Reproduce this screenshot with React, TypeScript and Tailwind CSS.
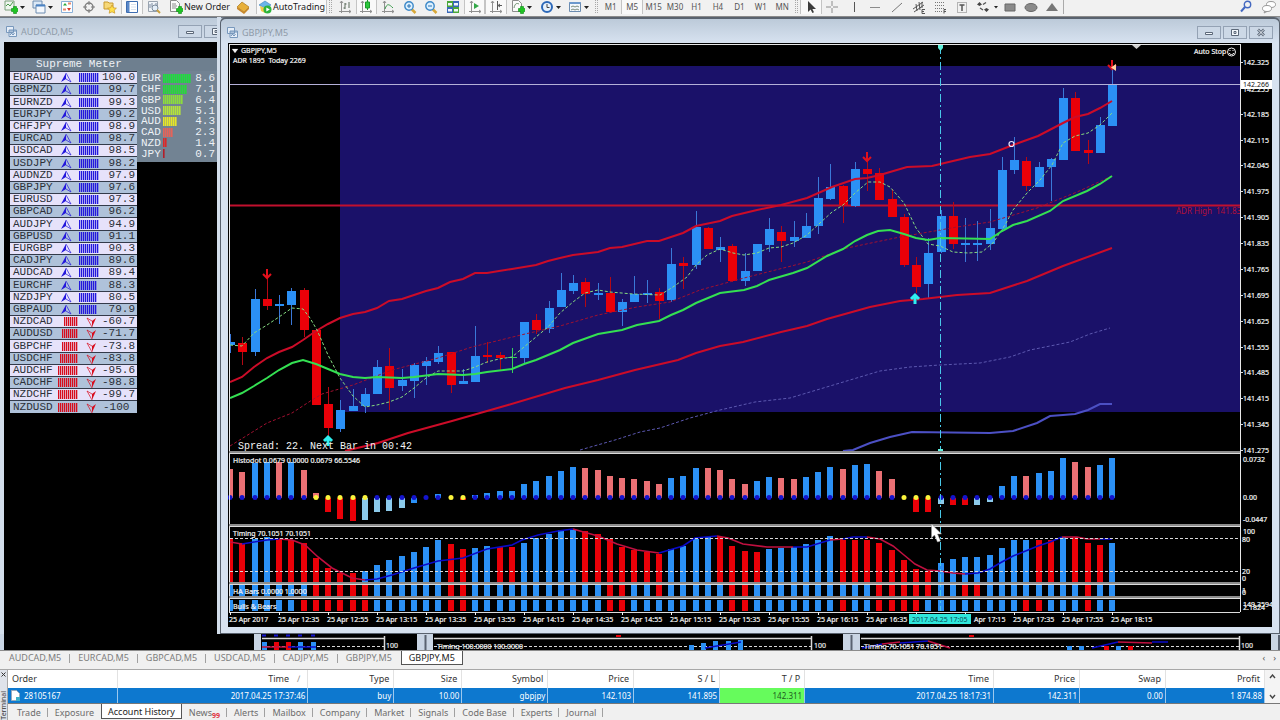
import { ReactNode } from "react";

const UI = "font-['Noto_Sans','Open_Sans',sans-serif]";
const MONO = "font-['Liberation_Mono',monospace]";

const BLUE = "#2b90f5";
const RED = "#ea0008";
const PINK = "#ea7074";
const PALE = "#8ccaea";

/* ---------- chart data ---------- */

type TCandle = [number, number, number, number, "b" | "r" | "g"];

// wick top, body top, body bottom, wick bottom, colour
const candles: TCandle[] = [
  [334, 342, 345, 353, "b"], [337, 343, 352, 365, "r"], [289, 299, 352, 356, "b"], [277, 299, 306, 310, "r"],
  [295, 304, 306, 324, "b"], [288, 291, 305, 325, "b"], [288, 290, 330, 337, "r"], [330, 330, 405, 405, "r"],
  [387, 404, 428, 437, "r"], [400, 410, 429, 432, "b"], [389, 406, 411, 411, "b"], [388, 394, 406, 413, "b"],
  [360, 367, 394, 394, "b"], [348, 366, 388, 410, "r"], [369, 380, 386, 391, "b"], [363, 365, 381, 398, "b"],
  [357, 361, 366, 385, "b"], [346, 353, 362, 364, "b"], [352, 352, 385, 393, "r"], [369, 381, 384, 384, "b"],
  [326, 356, 382, 382, "b"], [342, 355, 357, 363, "r"], [352, 355, 358, 370, "r"], [348, 357, 358, 373, "g"],
  [322, 322, 358, 364, "b"], [314, 320, 330, 334, "r"], [301, 308, 329, 333, "b"], [273, 290, 307, 307, "b"],
  [275, 283, 291, 294, "b"], [278, 282, 294, 307, "r"], [283, 293, 295, 300, "b"], [277, 293, 312, 313, "r"],
  [299, 302, 312, 326, "b"], [276, 294, 302, 302, "b"], [280, 293, 295, 303, "b"], [288, 292, 301, 319, "r"],
  [248, 264, 300, 302, "b"], [257, 263, 266, 289, "r"], [211, 227, 265, 269, "b"], [227, 228, 249, 249, "r"],
  [237, 247, 250, 262, "b"], [244, 246, 281, 282, "r"], [253, 271, 281, 286, "b"], [244, 244, 271, 271, "b"],
  [218, 229, 245, 252, "b"], [226, 232, 241, 262, "r"], [221, 237, 241, 247, "b"], [213, 226, 238, 238, "b"],
  [177, 198, 226, 234, "b"], [164, 187, 199, 200, "b"], [185, 186, 205, 223, "r"], [162, 169, 206, 207, "b"],
  [160, 169, 174, 191, "r"], [168, 173, 200, 200, "r"], [189, 199, 217, 217, "r"], [214, 217, 265, 267, "r"],
  [257, 265, 287, 293, "r"], [238, 253, 284, 298, "b"], [210, 216, 252, 253, "b"], [202, 216, 244, 249, "r"],
  [218, 243, 245, 262, "b"], [221, 243, 245, 261, "b"], [209, 228, 244, 250, "b"], [157, 170, 229, 230, "b"],
  [137, 160, 170, 174, "b"], [157, 161, 186, 191, "r"], [162, 167, 187, 187, "b"], [158, 159, 167, 201, "b"],
  [88, 98, 160, 160, "b"], [92, 98, 151, 151, "r"], [140, 150, 153, 164, "r"], [117, 125, 153, 153, "b"],
  [68, 84, 126, 126, "b"],
];

const candleFill = { b: BLUE, r: RED, g: "#35d05a" };

// outer end of every histogram bar, the zero line is at 498
const histo = [
  469, 472, 463, 462, 462, 462, 470, 493, 512, 519, 521, 520, 512, 511, 508, 503, 498, 494, 498, 500, 495, 493, 491,
  491, 484, 481, 476, 471, 467, 468, 470, 476, 478, 479, 481, 484, 478, 476, 468, 468, 470, 479, 484, 481, 477, 478,
  479, 477, 472, 467, 469, 465, 464, 471, 479, 498, 512, 512, 504, 505, 505, 505, 502, 486, 476, 476, 473, 471, 458,
  462, 467, 465, 458,
];
const histoColor = "ppbbpbpprrrllllbbbrrbbbbbbbbbpppppppbbbppppbbppbbbpbbpprrrlrrllbbpbbbppbb";
const yellowDots = [7, 8, 9, 10, 11, 18, 19, 55, 56, 57];
const histoFill: Record<string, string> = { p: PINK, b: BLUE, r: RED, l: PALE };

const timing = [
  539, 543, 539, 537, 539, 540, 543, 558, 568, 573, 573, 571, 565, 560, 556, 552, 547, 540, 544, 549, 548, 546, 547,
  547, 543, 538, 534, 530, 530, 531, 534, 539, 547, 550, 552, 554, 549, 546, 539, 537, 537, 546, 551, 552, 549, 548,
  547, 544, 540, 536, 540, 540, 540, 543, 550, 560, 569, 571, 563, 559, 557, 557, 555, 548, 540, 540, 540, 540, 537,
  537, 543, 545, 543,
];
const timingColor = "rrbbrrrrrrrbbbbbbbrrbbrrbbbbbrrrrrrrbbbbrrrrbbbbbbrrrrrrrrbbbbbbbbrrbrrrb";
const haColor = "bbbbbbbrrrrrbbbbbbrrbbbbbbbbbbbrrbbrbbbbbrrbbbbbbbbbbrrrrrbbrrbbbbbbbbrbb";
const bullsColor = "bbbbbbrrrrrrbbbbbbrrbbbbbbbbbbbrrbbbbbbbbrrbbbbbbbrbbrrrrbbbbbbbbrrbbbrbb";

const upperBand =
  "230,382 242,377 254,367 267,358 279,352 292,347 303,340 316,331 328,324 340,318 353,314 365,312 377,308 389,301 402,299 414,295 426,291 438,288 450,282 463,279 475,273 487,273 499,271 512,269 524,267 536,265 548,261 560,258 573,255 598,252 610,248 622,247 647,241 659,241 683,233 696,226 720,221 732,216 757,210 781,205 807,198 832,187 855,179 867,178 880,175 890,172 907,167 932,166 953,161 970,157 990,154 1013,145 1038,136 1063,123 1075,117 1088,114 1100,108 1112,101";
const greenLine =
  "230,398 242,393 254,386 267,378 279,370 292,363 303,360 316,364 328,369 340,374 353,377 365,378 377,377 402,378 414,377 438,374 463,375 475,374 487,372 512,369 524,364 536,360 548,355 560,350 573,343 598,334 610,332 622,330 637,325 659,321 671,315 683,310 696,303 720,293 744,290 757,286 769,280 793,273 807,268 827,256 843,249 855,241 867,235 878,231 890,230 904,234 916,238 928,240 940,238 990,239 1002,231 1013,225 1027,221 1050,211 1063,201 1087,191 1100,184 1112,176";
const lowerBand =
  "345,451 378,443 408,433 452,421 508,405 565,388 598,380 635,370 678,360 696,353 720,346 743,342 781,332 807,326 827,319 870,307 900,301 923,299 957,295 990,293 1027,281 1063,266 1112,248";
const midBand =
  "230,446 267,423 292,413 312,400 322,394 353,385 392,370 438,358 472,347 525,334 560,326 598,315 637,307 670,302 700,290 744,278 807,262 847,248 900,237 923,233 957,227 990,222 1037,208 1077,192 1112,176";
const fastMa =
  "230,345 242,346 254,333 267,325 279,317 292,308 303,309 310,318 317,330 328,355 340,378 353,396 365,407 377,405 389,402 402,397 414,388 426,378 438,371 463,371 475,367 487,362 499,359 512,357 524,347 536,337 548,327 560,313 573,302 585,293 598,290 610,292 633,294 660,295 673,287 687,277 696,265 707,255 720,249 733,253 744,255 757,253 769,248 781,247 793,243 807,235 820,223 832,212 843,205 855,193 868,182 880,182 890,187 904,203 916,228 928,244 940,246 953,252 968,253 982,252 993,243 1005,225 1013,210 1027,193 1040,180 1052,165 1063,143 1075,136 1088,133 1100,125 1112,113";
const slowDash =
  "580,450 615,440 640,432 660,428 690,418 720,410 755,402 790,398 830,386 860,377 880,371 910,367 940,365 980,363 1010,357 1030,350 1070,342 1090,334 1110,328";
const slowLine =
  "843,451 853,450 870,443 890,437 912,432 990,433 1013,431 1037,423 1050,416 1063,415 1075,414 1088,410 1100,404 1112,404";

const timingLine: [string, string][] = [
  ["c", "230,542 242,544"],
  ["b", "242,544 254,542 267,540 279,539"],
  ["c", "279,539 292,540 305,545 318,557 332,568 352,578 365,580"],
  ["b", "365,580 377,579 392,575 414,568 438,561 463,558 487,549 512,545 522,540 538,535 558,531 573,529"],
  ["c", "573,529 580,531 598,536 617,544 637,550 659,553"],
  ["b", "659,553 683,546 695,538 717,536"],
  ["c", "717,536 728,538 743,544 767,547 793,547"],
  ["b", "793,547 807,547 830,540"],
  ["c", "830,540 843,539"],
  ["b", "843,539 853,537 867,537"],
  ["c", "867,537 880,539 893,546 904,555 915,564 927,570 940,571 953,573 965,574"],
  ["b", "965,574 978,573 990,569 1000,563 1013,556 1038,546 1050,542 1062,537"],
  ["c", "1062,537 1077,537 1087,539 1100,539"],
  ["b", "1100,539 1112,539"],
];

const prices = [
  "142.325", "142.255", "142.185", "142.115", "142.045", "141.975", "141.905", "141.835", "141.765", "141.695",
  "141.625", "141.555", "141.485", "141.415", "141.345", "141.275",
];

const times = [
  "2017", "12:35", "12:55", "13:15", "13:35", "13:55", "14:15", "14:35", "14:55", "15:15", "15:35", "15:55", "16:15",
  "16:35", "", "", "17:35", "17:55", "18:15",
];

const barX = (i: number) => Math.round(230 + i * 12.25);

/* ---------- chart ---------- */

function Strip({ colors, y, height }: { colors: string; y: number; height: number }) {
  return (
    <>
      {colors.split("").map((c, i) => (
        <rect key={i} x={barX(i) - 3} y={y} width={6} height={height} fill={c === "b" ? BLUE : RED} />
      ))}
    </>
  );
}

function DownArrow({ x, y }: { x: number; y: number }) {
  return <path d={`M${x} ${y - 5}v9M${x - 4} ${y}l4 4l4-4`} fill="none" stroke="#e3101c" strokeWidth={2} />;
}

function UpArrow({ x, y }: { x: number; y: number }) {
  return <path d={`M${x} ${y + 5}v-9M${x - 4} ${y}l4-4l4 4`} fill="none" stroke="#2ff0f0" strokeWidth={3} />;
}

function PriceChart() {
  return (
    <svg
      viewBox="228 43 1044 584"
      className={`block w-full bg-black text-[7px] ${UI}`}
      role="img"
      aria-label="GBPJPY M5 chart"
    >
      <defs>
        <clipPath id="plot">
          <rect x="230" y="45" width="1010" height="567" />
        </clipPath>
      </defs>
      <rect x="340" y="66" width="900" height="346" fill="#1a1169" />

      <g clipPath="url(#plot)" fill="none">
        <path d="M229 205.5H1240" stroke="#c2102e" strokeWidth="2" />
        {candles.map(([hi, top, bottom, lo, c], i) => (
          <g key={i}>
            <rect x={barX(i)} y={hi} width="1" height={lo - hi} fill={c === "b" ? "#3a78d8" : c === "r" ? "#b40814" : "#35d05a"} />
            <rect x={barX(i) - 4} y={top} width="9" height={Math.max(bottom - top, 1)} fill={candleFill[c]} />
          </g>
        ))}
        <polyline points={midBand} stroke="#a01030" strokeDasharray="3 2" />
        <polyline points={slowDash} stroke="#5c58b0" strokeDasharray="3 2" />
        <polyline points={slowLine} stroke="#4c50c4" strokeWidth="2" />
        <polyline points={upperBand} stroke="#cc0c28" strokeWidth="2" />
        <polyline points={lowerBand} stroke="#cc0c28" strokeWidth="2" />
        <polyline points={fastMa} stroke="#86dc80" strokeDasharray="3 2" />
        <polyline points={greenLine} stroke="#34e052" strokeWidth="2" />
      </g>

      <path d="M229 84.5H1240" stroke="#b4b0d8" />
      <DownArrow x={267} y={274} />
      <DownArrow x={867} y={157} />
      <DownArrow x={1112} y={65} />
      <path d="M1116 64v7l-5-3.500z" fill="#ffd0a0" />
      <UpArrow x={328} y={441} />
      <UpArrow x={915} y={299} />
      <circle cx="1011.500" cy="144" r="2.500" fill="none" stroke="#e8e8ff" strokeWidth="1.200" />
      <text x="1176" y="214" fill="#b41038" className="text-[8px] whitespace-pre">
        {"ADR High  141.83"}
      </text>

      {/* price axis */}
      <rect x="1240" y="45" width="32" height="582" fill="#000" />
      {prices.map((p, i) => {
        const y = 62 + Math.round(i * 25.87);
        return (
          <g key={p}>
            <path d={`M1240 ${y}.5h3`} stroke="#ddd" />
            <text x="1243" y={i === 1 ? y + 4 : y + 3} fill="#f2f2f2" stroke="#f2f2f2" strokeWidth="0.200">
              {p}
            </text>
          </g>
        );
      })}
      <rect x="1241" y="80" width="31" height="9" fill="#fff" />
      <text x="1243" y="87" fill="#111">
        142.266
      </text>

      {/* captions */}
      <g fill="#f4f4f4" stroke="#f4f4f4" strokeWidth="0.200">
        <path d="M232 49h6l-3 4z" />
        <text x="241" y="53">GBPJPY,M5</text>
        <text x="233" y="63" className="whitespace-pre">
          {"ADR 1895  Today 2269"}
        </text>
        <text x="1194" y="54">Auto Stop</text>
        <text x="238" y="449" strokeWidth="0" className={`text-[10px] ${MONO}`}>
          Spread: 22. Next Bar in 00:42
        </text>
      </g>
      <g stroke="#f0f0f0" fill="none">
        <circle cx="1231.500" cy="52" r="4" />
        <path d="M1229 53c1 2 4 2 5 0M1230 50v1M1233 50v1" />
      </g>
      <path d="M1132 45h9l-4.500 4z" fill="#d0d0d0" />

      {/* sub windows */}
      <rect x="230" y="451" width="1010" height="3" fill="#000" />
      {histo.map((y, i) => (
        <rect
          key={i}
          x={barX(i) - 3}
          y={Math.min(y, 498)}
          width={6}
          height={Math.abs(y - 498)}
          fill={histoFill[histoColor[i]]}
          clipPath="url(#plot)"
        />
      ))}
      {histo.map((_, i) => (
        <circle key={i} cx={barX(i)} cy={497.5} r={2.5} fill={yellowDots.includes(i) ? "#fbf43c" : "#1414cc"} />
      ))}
      <g clipPath="url(#plot)">
        {timing.map((y, i) => (
          <rect key={i} x={barX(i) - 3} y={y} width={6} height={582 - y} fill={timingColor[i] === "b" ? BLUE : RED} />
        ))}
        <Strip colors={haColor} y={585} height={11} />
        <Strip colors={bullsColor} y={600} height={11} />
        {timingLine.map(([c, points], i) => (
          <polyline key={i} points={points} fill="none" stroke={c === "b" ? "#0a0ac8" : "#c01040"} strokeWidth="1.600" />
        ))}
      </g>
      <path d="M230 538.500H1240M230 571.500H1240" stroke="#d8d8d8" strokeDasharray="3 2" />
      <path d="M940.500 46V611" stroke="#48c8e8" strokeDasharray="8 3 2 3" />
      <path d="M938 45h5v3l-2.500 3l-2.500-3zM938 449h5v4h-5z" fill="#60f0dc" />
      <path d="M229 44.500H1240M229.500 44V612M1240.500 44V612" stroke="#e8e8e8" />
      <g stroke="#dcdcdc">
        <path d="M229 453.500H1240M229 526.500H1240M229 584.500H1240M229 598.500H1240M229 612.500H1240" />
        <path d="M229 452H1240M229 525H1240M229 583H1240M229 597H1240" stroke="#8c8c8c" strokeWidth="2" />
      </g>
      <g fill="#f4f4f4" stroke="#f4f4f4" strokeWidth="0.200">
        <text x="233" y="463">Histodot 0.0679 0.0000 0.0679 66.5546</text>
        <text x="233" y="536">Timing 70.1051 70.1051</text>
        <text x="233" y="594">HA Bars 0.0000 1.0000</text>
        <text x="233" y="609">Bulls &amp; Bears</text>
        <text x="1243" y="462">0.0732</text>
        <text x="1243" y="500">0.00</text>
        <text x="1243" y="522">-0.0447</text>
        <text x="1243" y="534">100</text>
        <text x="1242" y="542">80</text>
        <text x="1242" y="574">20</text>
        <text x="1242" y="581">0</text>
        <text x="1242" y="593">1</text>
        <text x="1242" y="595">0</text>
        <text x="1243" y="607">149.3594</text>
        <text x="1243" y="610">2.1824</text>
        {times.map((t, i) => (
          <g key={i}>
            <path d={`M${barX(i * 4)}.500 612v3`} strokeWidth="1" />
            {t && (
              <text x={barX(i * 4) - 1} y="622">
                25 Apr {t}
              </text>
            )}
          </g>
        ))}
        <text x="974" y="622">Apr 17:15</text>
      </g>
      <rect x="909" y="614" width="62" height="10" fill="#2fe8dc" />
      <text x="912" y="622" fill="#0c4a58">
        2017.04.25 17:05
      </text>
      <path d="M931.500 524v14l3-3l3 7l3-1l-3-7h4z" fill="#fff" stroke="#999" strokeWidth="0.500" />
    </svg>
  );
}

/* ---------- supreme meter ---------- */

const pairs: [string, string, number][] = [
  ["EURAUD", "100.0", 10], ["GBPNZD", "99.7", 10], ["EURNZD", "99.3", 10], ["EURJPY", "99.2", 10],
  ["CHFJPY", "98.9", 10], ["EURCAD", "98.7", 10], ["USDCAD", "98.5", 10], ["USDJPY", "98.2", 10],
  ["AUDNZD", "97.9", 10], ["GBPJPY", "97.6", 10], ["EURUSD", "97.3", 10], ["GBPCAD", "96.2", 10],
  ["AUDJPY", "94.9", 10], ["GBPUSD", "91.1", 10], ["EURGBP", "90.3", 10], ["CADJPY", "89.6", 10],
  ["AUDCAD", "89.4", 10], ["EURCHF", "88.3", 9], ["NZDJPY", "80.5", 9], ["GBPAUD", "79.9", 9],
  ["NZDCAD", "-60.7", -7], ["AUDUSD", "-71.7", -8], ["GBPCHF", "-73.8", -8], ["USDCHF", "-83.8", -9],
  ["AUDCHF", "-95.6", -10], ["CADCHF", "-98.8", -10], ["NZDCHF", "-99.7", -10], ["NZDUSD", "-100", -10],
];

const currencies: [string, string, number, string][] = [
  ["EUR", "8.6", 14, "#1edc3c"], ["CHF", "7.1", 12, "#28d83a"], ["GBP", "6.4", 10, "#8cdc3c"],
  ["USD", "5.1", 9, "#b4e23c"], ["AUD", "4.3", 7, "#e6e628"], ["CAD", "2.3", 5, "#e4645a"],
  ["NZD", "1.4", 2, "#dc2828"], ["JPY", "0.7", 1, "#b41e28"],
];

function Gauge({ bars }: { bars: number }) {
  const up = bars > 0;
  const count = Math.abs(bars);
  return (
    <svg width="42" height="11" viewBox="0 0 42 11" className="block" fill={up ? "#2418dc" : "#d80c1c"}>
      {Array.from({ length: count }, (_, i) => (
        <rect key={i} x={up ? 21 + i * 2 : 18 - i * 2} y="1" width="1.300" height="9" />
      ))}
      {up ? (
        <>
          <path d="M8 1L3 10l5-3z" />
          <path d="M8 1l5 9l-5-3" fill="none" stroke="#2418dc" strokeWidth="0.700" />
        </>
      ) : (
        <>
          <path d="M34 11l4-9l-4 3z" />
          <path d="M34 11l-5-9l5 3" fill="none" stroke="#d80c1c" strokeWidth="0.700" />
        </>
      )}
    </svg>
  );
}

function SupremeMeter() {
  return (
    <div className={`w-[207px] ${MONO}`}>
      <div className="h-[13px] bg-[#6e7f8f] pl-[26px] text-[11px] leading-[13px] text-[#eef2f6]">Supreme Meter</div>
      <div className="flex items-start">
        <table className="h-[342px] w-[127px] table-fixed border-collapse">
          <colgroup>
            <col className="w-[48px]" />
            <col className="w-[42px]" />
            <col />
          </colgroup>
          <tbody>
            {pairs.map(([name, value, bars]) => (
              <tr key={name} className="border-t border-[#333a4a] text-[11px] leading-[11px] text-[#2c3038] odd:bg-[#e6e2fa] even:bg-[#afc2da]">
                <td className="p-0 pl-[3px]">{name}</td>
                <td className="p-0">
                  <Gauge bars={bars} />
                </td>
                <td className={`p-0 pr-[2px] ${value === "-100" ? "pl-[3px]" : "text-right"}`}>{value}</td>
              </tr>
            ))}
          </tbody>
        </table>
        <div className="bg-[#728393] pt-[2px] pb-[3px]">
          <table className="h-[86px] w-[80px] table-fixed border-collapse text-[11px] leading-[10px] text-[#eef2f6]">
            <colgroup>
              <col className="w-[26px]" />
              <col className="w-[28px]" />
              <col />
            </colgroup>
            <tbody>
              {currencies.map(([name, value, count, color]) => (
                <tr key={name}>
                  <td className="p-0 pl-[4px]">{name}</td>
                  <td className="p-0">
                    <svg width="28" height="9" className="block" fill={color}>
                      <rect width={count * 2} height="9" opacity="0.600" />
                      {Array.from({ length: count }, (_, i) => (
                        <rect key={i} x={i * 2} width="1" height="9" />
                      ))}
                    </svg>
                  </td>
                  <td className="p-0 pr-[2px] text-right">{value}</td>
                </tr>
              ))}
            </tbody>
          </table>
        </div>
      </div>
    </div>
  );
}

/* ---------- windows ---------- */

function CaptionButton({ label, children }: { label: string; children: ReactNode }) {
  return (
    <button
      aria-label={label}
      className="flex h-[13px] w-[24px] shrink-0 items-center justify-center border border-[#94a2b4] bg-[#ccd8e6]"
    >
      <svg width="12" height="9" viewBox="0 0 12 9" fill="none" stroke="#5c6878">
        {children}
      </svg>
    </button>
  );
}

function TitleBar({ title, closable }: { title: string; closable?: boolean }) {
  return (
    <div className="flex h-[24px] items-center gap-[4px] overflow-hidden pt-[3px] pr-[6px] pl-[6px]">
      <svg width="11" height="11" viewBox="0 0 11 11" fill="none">
        <path d="M.5.5h7v6h-7zM3 4h7.500v6.500H3z" fill="#e6eef8" stroke="#7898bc" />
        <path d="M3 5h7M4 9l1.500-2L7 9l1.500-2" stroke="#6c90b8" />
      </svg>
      <h2 className="grow text-[9px] leading-[12px] text-[#8e9aa8]">{title}</h2>
      <div className="flex shrink-0 gap-[2px]">
        <CaptionButton label={`Minimize ${title}`}>
          <path d="M2.500 4.500h7v2h-7z" fill="#f4f8fc" />
        </CaptionButton>
        <CaptionButton label={`Restore ${title}`}>
          <path d="M2.500 1.500h7v6h-7zM5 3.500h2v2H5z" fill="#f4f8fc" />
        </CaptionButton>
        {closable && (
          <CaptionButton label={`Close ${title}`}>
            <path d="M3 1.500l6 6M9 1.500l-6 6" strokeWidth="2.600" />
            <path d="M3 1.500l6 6M9 1.500l-6 6" stroke="#f0f4fa" />
          </CaptionButton>
        )}
      </div>
    </div>
  );
}

function BackWindows() {
  return (
    <svg viewBox="0 634 1280 17" className={`absolute bottom-0 left-0 block w-full text-[7px] ${UI}`} aria-hidden="true">
      <rect x="0" y="634" width="1280" height="17" fill="#c9d5e4" />
      <path d="M4 634h250v17H4zM261 634h156v17H261zM433 634h410v17H433zM860 634h411v17H860z" fill="#000" />
      <path d="M425.500 635v15M851.500 635v15M1279 635v15" stroke="#596270" strokeWidth="2" />
      <path d="M262 638.500h122M434 638.500h377M861 638.500h378M384.500 636v15M811.500 636v15M1239.500 636v15" stroke="#d8d8d8" strokeWidth="1.500" />
      <path d="M262 646.500h122M434 646.500h377M861 646.500h378" stroke="#d8d8d8" strokeDasharray="3 2" />
      <path d="M262 642h5v8h-5zM298 642h5v8h-5zM311 642h5v8h-5zM689 645h5v5h-5zM701 643h5v7h-5zM713 641h5v9h-5zM726 641h5v9h-5zM738 640h5v10h-5zM1067 646h5v4h-5zM1079 646h5v4h-5zM1116 646h5v4h-5z" fill={BLUE} />
      <path d="M274 642h5v8h-5zM286 642h5v8h-5zM1104 646h5v4h-5zM1128 646h5v4h-5zM616 635h5v2h-5zM969 635h5v2h-5z" fill={RED} />
      <path d="M262 635.500h4M274 635.500h4M286 635.500h4M298 635.500h4M311 635.500h4" stroke="#1414cc" strokeWidth="2" />
      <g fill="none" strokeWidth="1.600">
        <path d="M288 647h28M705 648l36-6M862 648l20-4M900 643l28-2M1092 648l26-6M1152 642h16" stroke="#0a0ac8" />
        <path d="M262 647h24M882 644l18-2M928 641l22 7M1118 642l34 1" stroke="#c01040" />
      </g>
      <g fill="#e8e8e8" stroke="#e8e8e8" strokeWidth="0.200">
        <text x="437" y="649">Timing 100.0000 100.0000</text>
        <text x="864" y="649">Timing 70.1051 70.1051</text>
        <text x="386" y="648">100</text>
        <text x="814" y="648">100</text>
        <text x="1241" y="648">100</text>
      </g>
      <path d="M0 650.500h1280" stroke="#8c8c8c" />
    </svg>
  );
}

/* ---------- toolbar ---------- */

function Icon({ children }: { children: ReactNode }) {
  return (
    <svg width="14" height="14" viewBox="0 0 14 14" fill="none" className="shrink-0">
      {children}
    </svg>
  );
}

function ToolButton({ label, pressed, children }: { label: string; pressed?: boolean; children: ReactNode }) {
  return (
    <button
      aria-label={label}
      className={`flex h-[14px] items-center justify-center ${pressed ? "border-x border-[#c4c4c4] bg-[#f9f9f9]" : ""}`}
    >
      <Icon>{children}</Icon>
    </button>
  );
}

function MenuButton({ label, children }: { label: string; children: ReactNode }) {
  return (
    <button aria-label={label} className="flex h-[14px] items-center gap-[2px] pl-[4px]">
      <Icon>{children}</Icon>
      <svg width="5" height="3" viewBox="0 0 5 3" fill="#222">
        <path d="M0 0h5L2.500 3z" />
      </svg>
    </button>
  );
}

function Grip() {
  return (
    <span className="flex w-[7px] shrink-0 justify-center">
      <span className="h-[13px] w-[3px] border-x border-dotted border-[#a8a8a8]" />
    </span>
  );
}

const plus = <path d="M7.500 8.500h2v-2h3v2h2v3h-2v2h-3v-2h-2z" fill="#1fc423" stroke="#0a8a12" strokeWidth="0.600" />;
const axes = <path d="M3.500 1v12M1 11.500h12M2 3l1.500-2L5 3M11 10l2 1.500l-2 1.500" stroke="#909090" />;
const frames = ["M1", "M5", "M15", "M30", "H1", "H4", "D1", "W1", "MN"];

function Toolbar() {
  return (
    <div className="flex h-[17px] shrink-0 items-start overflow-hidden border-b border-[#8a8a8a] bg-[#f1f1f1]">
      <div className="grid w-[56px] shrink-0 grid-cols-2">
        <MenuButton label="New chart">
          <path d="M1 1h9v9H1z" fill="#eef6ee" stroke="#7aa07a" />
          <path d="M2 6l2-2l2 2l3-4" stroke="#4a9a4a" />
          {plus}
        </MenuButton>
        <MenuButton label="Profiles">
          <path d="M1 1h9v7H1z" fill="#dbe8f6" stroke="#6c8cb0" />
          <path d="M4 5h9v8H4z" fill="#f4f8fd" stroke="#6c8cb0" />
          <path d="M4 5.500h9" stroke="#4b83c4" strokeWidth="2" />
        </MenuButton>
      </div>
      <div className="grid w-[109px] shrink-0 grid-cols-5">
        <ToolButton label="Market watch">
          <path d="M1.500 1.500h11v11h-11z" fill="#fff" stroke="#8ab0d8" />
          <path d="M3 5.500l2-2.500l2 2.500z" fill="#2aa83a" />
          <path d="M7 8l4 0l-2 3z" fill="#d83a2a" />
          <path d="M8 3.500h3M3 9.500h3" stroke="#e88a70" strokeWidth="2" />
        </ToolButton>
        <ToolButton label="Data window">
          <circle cx="7" cy="7" r="4" stroke="#7c7c7c" strokeWidth="1.400" />
          <path d="M7 1v4M7 9v4M1 7h4M9 7h4" stroke="#7c7c7c" />
        </ToolButton>
        <ToolButton label="Navigator">
          <path d="M1 2h4l1 1h4v6H1z" fill="#f6d878" stroke="#c89a30" />
          <path d="M9 5l1.400 2.800l3 .4l-2.200 2l.6 3L9 11.800L6.200 13.200l.6-3l-2.200-2l3-.4z" fill="#ffe04a" stroke="#c89420" strokeWidth="0.700" />
        </ToolButton>
        <ToolButton label="Terminal" pressed>
          <path d="M1.500 1.500h11v11h-11z" fill="#fff" stroke="#3c6cb0" />
          <path d="M2 2h2.500v10H2z" fill="#5a88c8" />
          <path d="M6 4.500h5M6 7h5M6 9.500h5" stroke="#d8e2ee" />
        </ToolButton>
        <ToolButton label="Strategy tester">
          <path d="M1.500 1.500h9v10h-9z" fill="#f0f4f8" stroke="#9aa4b0" />
          <path d="M3 8V4M5 7V3M9 6V3" stroke="#7a8aa0" />
          <circle cx="8" cy="8" r="3" fill="#e4eef8" stroke="#7c8c9c" />
          <path d="M10 10l3 3" stroke="#c8a040" strokeWidth="2" />
        </ToolButton>
      </div>
      <button className="flex h-[13px] w-[65px] shrink-0 items-center gap-[1px] pl-[4px] text-[9px] leading-[12px] whitespace-nowrap text-[#1c1c1c]">
        <Icon>
          <path d="M1.500 .5h6l3 3v8h-9z" fill="#fafafa" stroke="#8c8c8c" />
          <path d="M3 4h4M3 6h5M3 8h4" stroke="#8c8c8c" />
          {plus}
        </Icon>
        New Order
      </button>
      <div className="grid w-[26px] shrink-0">
        <ToolButton label="MetaEditor">
          <path d="M1 7l5-5l7 5l-5 5z" fill="#e8b03a" stroke="#a87820" strokeWidth="0.700" />
          <path d="M1 7l7 5v2L1 9zM8 12l5-5v2l-5 5z" fill="#c8872a" />
        </ToolButton>
      </div>
      <button className="flex h-[14px] w-[71px] shrink-0 items-center gap-px border-x border-[#c4c4c4] bg-[#f9f9f9] pl-px text-[9px] leading-[12px] whitespace-nowrap text-[#1c1c1c]">
        <Icon>
          <path d="M1 5l6-4l6 4l-6 3z" fill="#6ab4e8" stroke="#3a80b8" strokeWidth="0.600" />
          <path d="M2 6l5 2v5L3 11z" fill="#f0c84a" />
          <circle cx="9.500" cy="9.500" r="4" fill="#2cb43a" />
          <path d="M8.300 7.500l3.500 2l-3.500 2z" fill="#fff" />
        </Icon>
        AutoTrading
      </button>
      <Grip />
      <div className="grid w-[173px] shrink-0 grid-cols-8">
        <ToolButton label="Bar chart">
          {axes}
          <path d="M7 3v6M5.500 8H7M7 4h1.500M11 2v6" stroke="#5a6a5a" />
        </ToolButton>
        <ToolButton label="Candlesticks" pressed>
          {axes}
          <path d="M8.500 0v10" stroke="#1a9a2a" />
          <path d="M6.500 2h4v6h-4z" fill="#2cc83c" stroke="#1a9a2a" />
        </ToolButton>
        <ToolButton label="Line chart">
          {axes}
          <path d="M4 9c2-6 4-5 8-1" stroke="#3a9a4a" />
        </ToolButton>
        <ToolButton label="Zoom in">
          <path d="M8.500 9l4 4" stroke="#d8a838" strokeWidth="2.500" />
          <circle cx="6" cy="6" r="4.200" fill="#dcf0ff" stroke="#3c88c8" strokeWidth="1.400" />
          <path d="M4 6h4M6 4v4" stroke="#2870b0" />
        </ToolButton>
        <ToolButton label="Zoom out">
          <path d="M8.500 9l4 4" stroke="#d8a838" strokeWidth="2.500" />
          <circle cx="6" cy="6" r="4.200" fill="#dcf0ff" stroke="#3c88c8" strokeWidth="1.400" />
          <path d="M4 6h4" stroke="#2870b0" />
        </ToolButton>
        <ToolButton label="Tile windows">
          <path d="M1 1h6v6H1zM7 7h6v6H7z" fill="#4aa838" />
          <path d="M7 1h6v6H7zM1 7h6v6H1z" fill="#3868b8" />
          <path d="M2 3h4v2.500H2zM8 3h4v2.500H8zM2 9h4v2.500H2zM8 9h4v2.500H8z" fill="#f0f6fa" />
        </ToolButton>
        <ToolButton label="Auto scroll" pressed>
          {axes}
          <path d="M6 3l5 3l-5 3z" fill="#34a848" />
        </ToolButton>
        <ToolButton label="Chart shift" pressed>
          {axes}
          <path d="M8.500 1v9M13 5.500H9.500M11 4L9 5.500L11 7" stroke="#5a5a5a" />
        </ToolButton>
      </div>
      <div className="grid w-[86px] shrink-0 grid-cols-3">
        <MenuButton label="Indicators">
          <path d="M1.500 .5h6l3 3v8h-9z" fill="#fafafa" stroke="#8c8c8c" />
          <path d="M3 8c1-5 3-5 5-4" stroke="#6c8c6c" />
          {plus}
        </MenuButton>
        <MenuButton label="Periodicity">
          <circle cx="7" cy="7" r="5" fill="#e8f2fc" stroke="#2c68b8" strokeWidth="2" />
          <path d="M7 4v3.500h2.500" stroke="#444" />
        </MenuButton>
        <MenuButton label="Templates">
          <path d="M1.500 2.500h11v9h-11z" fill="#f4f8fc" stroke="#6c8cb0" />
          <path d="M1.500 3h11" stroke="#6c98cc" strokeWidth="2" />
          <path d="M3 7l2-1l2 1l2-1l2 1M3 10l2-1l2 1l2-1l2 1" stroke="#7c8c7c" />
        </MenuButton>
      </div>
      <Grip />
      <div className="grid w-[193px] shrink-0 grid-cols-9 text-[8px] text-[#555]">
        {frames.map((f) => (
          <button
            key={f}
            className={`h-[14px] leading-[14px] ${f === "M5" ? "border-x border-[#c4c4c4] bg-[#f9f9f9]" : ""}`}
          >
            {f}
          </button>
        ))}
      </div>
      <Grip />
      <div className="grid w-[194px] shrink-0 grid-cols-9">
        <ToolButton label="Cursor" pressed>
          <path d="M4 1v11l2.600-2.400L8.400 13l1.600-.8L8.400 9H12z" fill="#3c3c3c" />
        </ToolButton>
        <ToolButton label="Crosshair">
          <path d="M7 1v5M7 8v5M1 7h5M8 7h5" stroke="#8c8c8c" />
        </ToolButton>
        <ToolButton label="Vertical line">
          <path d="M7.500 2v10" stroke="#555" />
        </ToolButton>
        <ToolButton label="Horizontal line">
          <path d="M2 7.500h10" stroke="#8c8c8c" />
        </ToolButton>
        <ToolButton label="Trendline">
          <path d="M2 12L12 3" stroke="#777" />
        </ToolButton>
        <ToolButton label="Equidistant channel">
          <path d="M1 9l10-7M2 12l10-7M4 4l1 7M7 2l1 8M10 2l0 6" stroke="#555" />
          <path d="M13 9.500h-3v4h3M10 11.500h2" stroke="#555" />
        </ToolButton>
        <ToolButton label="Fibonacci retracement">
          <path d="M2 2.500h10M2 5.500h10M2 8.500h10M2 11.500h7" stroke="#777" strokeDasharray="1 1" />
          <path d="M13 9.500h-2v4M11 11.500h2" stroke="#555" />
        </ToolButton>
        <ToolButton label="Text">
          <path d="M2.500 2.500h9v10h-9z" stroke="#777" strokeDasharray="1 1" />
          <path d="M4.500 5h5M7 5v6" stroke="#555" strokeWidth="1.500" />
        </ToolButton>
        <ToolButton label="Arrows">
          <path d="M1 4.500L3.500 2L6 4.500L3.500 6zM8 9.500l2.500-1.500L13 9.500L10.500 12z" fill="#444" />
          <path d="M7 4.500l3-2M4 8l3 2" stroke="#555" strokeWidth="1.400" />
        </ToolButton>
      </div>
      <svg width="5" height="14" viewBox="0 0 5 14" fill="#222" className="shrink-0">
        <path d="M0 6h4L2 8.500z" />
      </svg>
      <div className="grid w-[65px] shrink-0 grid-cols-3 border-r border-[#aaa]">
        <ToolButton label="Rectangle">
          <path d="M2 4h10v7H2z" fill="#8a8a8a" stroke="#666" />
        </ToolButton>
        <ToolButton label="Ellipse">
          <ellipse cx="7" cy="7.500" rx="6" ry="4" fill="#8a8a8a" stroke="#666" />
        </ToolButton>
        <ToolButton label="Triangle">
          <path d="M7 3l6 8H1z" fill="#777" />
        </ToolButton>
      </div>
      <div className="ml-auto grid w-[46px] shrink-0 grid-cols-2">
        <ToolButton label="Search">
          <circle cx="8.500" cy="4.500" r="3.200" stroke="#4468c0" strokeWidth="1.400" />
          <path d="M6 7l-4 4.500" stroke="#4468c0" strokeWidth="2" />
        </ToolButton>
        <ToolButton label="Chat">
          <ellipse cx="9" cy="4.500" rx="4.500" ry="3" fill="#fff" stroke="#999" />
          <ellipse cx="5" cy="8.500" rx="4.500" ry="3" fill="#fff" stroke="#999" />
          <path d="M3 11l-1 2l3-1.500" stroke="#999" />
        </ToolButton>
      </div>
    </div>
  );
}

/* ---------- bottom part ---------- */

const chartTabs = ["AUDCAD,M5", "EURCAD,M5", "GBPCAD,M5", "USDCAD,M5", "CADJPY,M5", "GBPJPY,M5"];

function ChartTabs() {
  return (
    <div className="flex h-[18px] shrink-0 items-start bg-[#f0f0f0] pl-px text-[9px] leading-[14px] text-[#7d7d7d]">
      {chartTabs.map((t, i) => (
        <button key={t} className="flex h-[14px] items-center pl-[8px]">
          {t}
          <span className={`ml-[8px] h-[9px] w-px ${i === 5 ? "" : "bg-[#a0a0a0]"}`} />
        </button>
      ))}
      <button className="h-[14px] border-x border-b border-[#555] bg-white px-[7px] text-[#222]">GBPJPY,M5</button>
      <div className="ml-auto flex gap-[8px] pr-[4px] text-[#555]">
        <button aria-label="Scroll tabs left">‹</button>
        <button aria-label="Scroll tabs right">›</button>
      </div>
    </div>
  );
}

const columns: [string, string, string][] = [
  ["Order", "28105167", "w-[110px]"],
  ["Time", "2017.04.25 17:37:46", "w-[190px]"],
  ["Type", "buy", "w-[86px]"],
  ["Size", "10.00", "w-[68px]"],
  ["Symbol", "gbpjpy", "w-[86px]"],
  ["Price", "142.103", "w-[86px]"],
  ["S / L", "141.895", "w-[86px]"],
  ["T / P", "142.311", "w-[85px]"],
  ["Time", "2017.04.25 18:17:31", "w-[189px]"],
  ["Price", "142.311", "w-[86px]"],
  ["Swap", "0.00", "w-[86px]"],
  ["Profit", "1 874.88", "w-[99px]"],
];

const terminalTabs = [
  "Trade", "Exposure", "Account History", "News", "Alerts", "Mailbox", "Company", "Market", "Signals", "Code Base",
  "Experts", "Journal",
];

function Terminal() {
  return (
    <div className="flex h-[51px] shrink-0 overflow-hidden border-t border-[#a8a8a8] bg-[#f0f0f0]">
      <div className="flex w-[7px] shrink-0 flex-col items-center justify-between bg-[#dfe3ea] text-[#333]">
        <button aria-label="Close terminal" className="pt-[2px]">
          <svg width="5" height="5" className="block" stroke="#333">
            <path d="M.5.5l4 4M4.500.5l-4 4" />
          </svg>
        </button>
        <span className="rotate-180 text-[7px] leading-[7px] [writing-mode:vertical-rl]">Terminal</span>
      </div>
      <div className="min-w-0 grow border-l border-[#a8a8a8]">
        <div className="flex h-[34px] border-b border-[#777] bg-white">
          <table className="grow table-fixed border-collapse">
            <thead>
              <tr className="h-[18px] text-[9px] leading-[12px] text-[#333]">
                {columns.map(([name, , width], i) => (
                  <th
                    key={i}
                    className={`border-r border-[#e2e2e2] p-0 font-normal ${width} ${i === 0 ? "pl-[4px] text-left" : "pr-[4px] text-right"}`}
                  >
                    {name}
                    {i === 1 && <span className="pr-[3px] pl-[8px] text-[#888]">∕</span>}
                  </th>
                ))}
              </tr>
            </thead>
            <tbody>
              <tr className="h-[15px] bg-[#0d78cf] text-[8px] leading-[12px] text-white">
                {columns.map(([name, value], i) => (
                  <td
                    key={i}
                    className={`border-r border-[#9cc8ee] p-0 ${i === 0 ? "pl-[3px]" : "pr-[2px] text-right"} ${name === "T / P" ? "bg-[#66fb5c] text-[#1e5c1e]" : ""}`}
                  >
                    {i === 0 ? (
                      <span className="flex items-center gap-[4px]">
                        <svg width="9" height="11" viewBox="0 0 9 11">
                          <path d="M.5.5h5l3 3v7h-8z" fill="#fff" stroke="#9ab" />
                          <path d="M5 7h4v4H5z" fill="#3cb0c8" />
                        </svg>
                        {value}
                      </span>
                    ) : (
                      value
                    )}
                  </td>
                ))}
              </tr>
            </tbody>
          </table>
          <div className="flex w-[15px] shrink-0 flex-col items-center justify-between bg-[#f4f4f4] py-[4px]">
            <button aria-label="Scroll up" className="block">
              <svg width="7" height="5" fill="none" stroke="#444" strokeWidth="1.400"><path d="M1 4l2.500-3L6 4" /></svg>
            </button>
            <button aria-label="Scroll down" className="block">
              <svg width="7" height="5" fill="none" stroke="#444" strokeWidth="1.400"><path d="M1 1l2.500 3L6 1" /></svg>
            </button>
          </div>
        </div>
        <div className="flex h-[16px] items-start pl-[2px] text-[9px] leading-[15px] text-[#6c6c6c]">
          {terminalTabs.map((t) =>
            t === "Account History" ? (
              <button key={t} className="h-[15px] border-x border-b border-[#555] bg-white px-[6px] whitespace-nowrap text-[#222]">
                {t}
              </button>
            ) : (
              <button key={t} className="flex h-[16px] items-center pl-[7px] whitespace-nowrap">
                {t}
                {t === "News" && <span className="self-end text-[7px] leading-[9px] font-bold text-[#e03040]">99</span>}
                <span className={`ml-[6px] h-[9px] w-px ${t === "Exposure" ? "" : "bg-[#a0a0a0]"}`} />
              </button>
            ),
          )}
        </div>
      </div>
    </div>
  );
}

export default function App() {
  return (
    <div className={`flex h-screen min-h-[720px] flex-col overflow-hidden bg-[#f0f0f0] ${UI}`}>
      <Toolbar />
      <main className="relative min-h-0 grow overflow-hidden bg-[#9aa4b0]">
        <section className="absolute inset-y-0 left-0 flex w-[254px] flex-col border-t border-[#6c7684] bg-linear-to-b from-[#bccad9] to-[#d3deeb] to-[24px]">
          <div className="w-[234px]">
            <TitleBar title="AUDCAD,M5" />
          </div>
          <div className="ml-[4px] grow bg-black pt-[16px] pl-[6px]">
            <SupremeMeter />
          </div>
        </section>
        <div className="absolute inset-y-0 left-[217px] w-[4px] bg-[#d3deeb]" />
        <BackWindows />
        <section className="absolute top-0 right-0 left-[220px] rounded-t-md border border-t-2 border-[#59626e] bg-linear-to-b from-[#bccad9] to-[#d7e2f0] to-[24px] pb-[6px]">
          <TitleBar title="GBPJPY,M5" closable />
          <div className="mr-[7px] ml-[7px]">
            <PriceChart />
          </div>
        </section>
      </main>
      <ChartTabs />
      <Terminal />
    </div>
  );
}
